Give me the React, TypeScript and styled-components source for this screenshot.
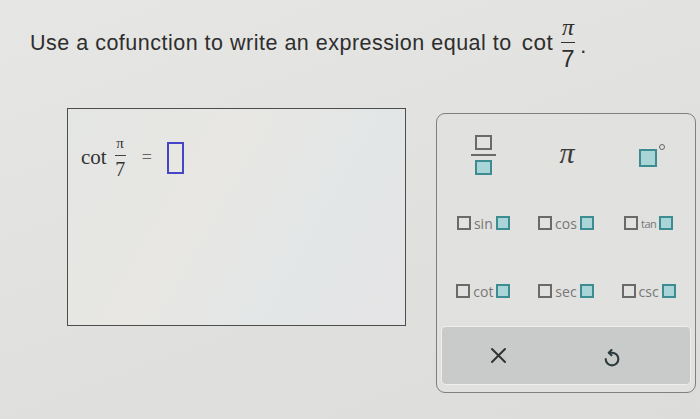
import React from "react";
import styled, { createGlobalStyle } from "styled-components";

const Global = createGlobalStyle`
  html, body { margin: 0; padding: 0; }
  body {
    width: 700px;
    height: 419px;
    overflow: hidden;
    background: linear-gradient(160deg, #e6e6e4 0%, #e1e2df 50%, #dcdddb 100%);
    font-family: "Liberation Sans", Arial, sans-serif;
  }
`;

const Page = styled.div`
  display: flex;
  flex-direction: column;
  width: 700px;
  height: 419px;
`;

const Title = styled.div`
  display: flex;
  align-items: center;
  height: 66px;
  padding: 10px 0 0 30px;
  font-size: 21.5px;
  color: #2e2e2e;
  letter-spacing: 0.5px;
`;

const Cot = styled.span`
  margin-left: 10px;
  font-size: 22.5px;
`;

const TFrac = styled.span`
  display: inline-flex;
  flex-direction: column;
  align-items: center;
  margin-left: 8px;
  line-height: 1;
`;

const TNum = styled.span`
  font-family: "Liberation Serif", serif;
  font-style: italic;
  font-size: 24px;
  padding-bottom: 3px;
`;

const TBar = styled.span`
  width: 14px;
  height: 1.5px;
  background: #333;
`;

const TDen = styled.span`
  font-size: 24px;
  padding-top: 4px;
`;

const Period = styled.span`
  margin-left: 5px;
  margin-top: 6px;
`;

const Main = styled.div`
  display: flex;
  align-items: flex-start;
  padding: 32px 0 0 67px;
  gap: 30px;
`;

const AnswerBox = styled.div`
  width: 339px;
  height: 218px;
  border: 1.5px solid #4d4d4d;
  background: linear-gradient(120deg, #e4e6e3 0%, #e8e7e4 40%, #e2e6e6 70%, #e6e4e6 100%);
  box-sizing: border-box;
  padding: 27px 0 0 13px;
`;

const Expr = styled.div`
  display: flex;
  align-items: center;
  font-family: "Liberation Serif", "Times New Roman", serif;
  color: #333;
  font-size: 21px;
`;

const EFrac = styled.span`
  display: inline-flex;
  flex-direction: column;
  align-items: center;
  margin-left: 8px;
  line-height: 1;
`;

const ENum = styled.span`
  font-size: 15px;
  padding-bottom: 4px;
`;

const EBar = styled.span`
  width: 11px;
  height: 1.3px;
  background: #444;
`;

const EDen = styled.span`
  font-size: 20px;
  padding-top: 3px;
`;

const Equals = styled.span`
  margin-left: 16px;
  color: #666;
  font-size: 18px;
`;

const Blank = styled.span`
  display: inline-block;
  width: 13px;
  height: 28px;
  border: 2px solid #4545c8;
  margin-left: 15px;
  margin-top: 0px;
`;

const Panel = styled.div`
  margin-top: 5px;
  width: 260px;
  height: 280px;
  box-sizing: border-box;
  border: 1.5px solid #7f807f;
  border-radius: 9px;
  background: #e1e1df;
  padding: 7px 5px 8px 5px;
  display: flex;
  flex-direction: column;
`;

const KeyGrid = styled.div`
  display: grid;
  grid-template-columns: repeat(3, 1fr);
  grid-auto-rows: 68px;
`;

const Key = styled.div`
  display: flex;
  align-items: center;
  justify-content: center;
  color: #6f6f6f;
`;

const Sq = styled.span<{ $teal?: boolean; $w?: number; $h?: number }>`
  display: inline-block;
  box-sizing: border-box;
  width: ${(p) => p.$w ?? 14}px;
  height: ${(p) => p.$h ?? 14}px;
  border: 2px solid ${(p) => (p.$teal ? "#3d8c92" : "#6a6a6a")};
  background: ${(p) => (p.$teal ? "#a9d5d8" : "transparent")};
`;

const FracIcon = styled.span`
  display: inline-flex;
  flex-direction: column;
  align-items: center;
  gap: 4px;
  margin-left: 0px;
`;

const FracLine = styled.span`
  width: 25px;
  height: 2px;
  background: #6a6a6a;
`;

const Pi = styled.span`
  font-family: "Liberation Serif", serif;
  font-style: italic;
  font-size: 30px;
  color: #3a3a3a;
  margin-left: 2px;
  margin-top: -4px;
`;

const DegIcon = styled.span`
  display: inline-flex;
  align-items: flex-start;
  margin-left: 6px;
  margin-top: 6px;
`;

const Deg = styled.span`
  width: 4px;
  height: 4px;
  border: 1.5px solid #666;
  border-radius: 50%;
  margin-left: 2px;
  margin-top: -5px;
`;

const Fn = styled.span<{ $small?: boolean }>`
  display: inline-flex;
  align-items: center;
  gap: 3px;
  font-family: "Open Sans", "Liberation Sans", sans-serif;
  font-size: ${(p) => (p.$small ? 11 : 14)}px;
  letter-spacing: ${(p) => (p.$small ? "-0.5px" : "0")};
  color: #777;
`;

const Bar = styled.div`
  margin-top: 2px;
  flex: 1;
  display: grid;
  grid-template-columns: 1fr 1fr;
  padding-right: 22px;
  background: #c9cbca;
  border-radius: 4px;
  box-shadow: 0 0 0 1px #eeeeec;
`;

const BarBtn = styled.div`
  display: flex;
  align-items: center;
  justify-content: center;
`;

function TrigKey({ name, small }: { name: string; small?: boolean }) {
  return (
    <Key>
      <Fn $small={small}>
        <Sq />
        <span>{name}</span>
        <Sq $teal />
      </Fn>
    </Key>
  );
}

export default function App() {
  return (
    <>
      <Global />
      <Page>
        <Title>
          <span>Use a cofunction to write an expression equal to</span>
          <Cot>cot</Cot>
          <TFrac>
            <TNum>π</TNum>
            <TBar />
            <TDen>7</TDen>
          </TFrac>
          <Period>.</Period>
        </Title>
        <Main>
          <AnswerBox>
            <Expr>
              <span>cot</span>
              <EFrac>
                <ENum>π</ENum>
                <EBar />
                <EDen>7</EDen>
              </EFrac>
              <Equals>=</Equals>
              <Blank />
            </Expr>
          </AnswerBox>
          <Panel>
            <KeyGrid>
              <Key>
                <FracIcon>
                  <Sq $w={17} $h={15} />
                  <FracLine />
                  <Sq $teal $w={17} $h={15} />
                </FracIcon>
              </Key>
              <Key>
                <Pi>π</Pi>
              </Key>
              <Key>
                <DegIcon>
                  <Sq $teal $w={18} $h={18} />
                  <Deg />
                </DegIcon>
              </Key>
              <TrigKey name="sin" />
              <TrigKey name="cos" />
              <TrigKey name="tan" small />
              <TrigKey name="cot" />
              <TrigKey name="sec" />
              <TrigKey name="csc" />
            </KeyGrid>
            <Bar>
              <BarBtn>
                <svg width="17" height="17" viewBox="0 0 17 17">
                  <path d="M2 2 L15 15 M15 2 L2 15" stroke="#333" strokeWidth="2" strokeLinecap="round" />
                </svg>
              </BarBtn>
              <BarBtn>
                <svg width="19" height="19" viewBox="0 0 18 18" style={{ marginTop: 6 }}>
                  <path
                    d="M6.5 3.5 L9.5 3.5 A6 6 0 1 1 3.5 9.5"
                    fill="none"
                    stroke="#2d3a3e"
                    strokeWidth="2"
                    strokeLinecap="round"
                  />
                  <path
                    d="M9 1 L6.5 3.5 L9 6"
                    fill="none"
                    stroke="#2d3a3e"
                    strokeWidth="2"
                    strokeLinecap="round"
                    strokeLinejoin="round"
                  />
                </svg>
              </BarBtn>
            </Bar>
          </Panel>
        </Main>
      </Page>
    </>
  );
}
